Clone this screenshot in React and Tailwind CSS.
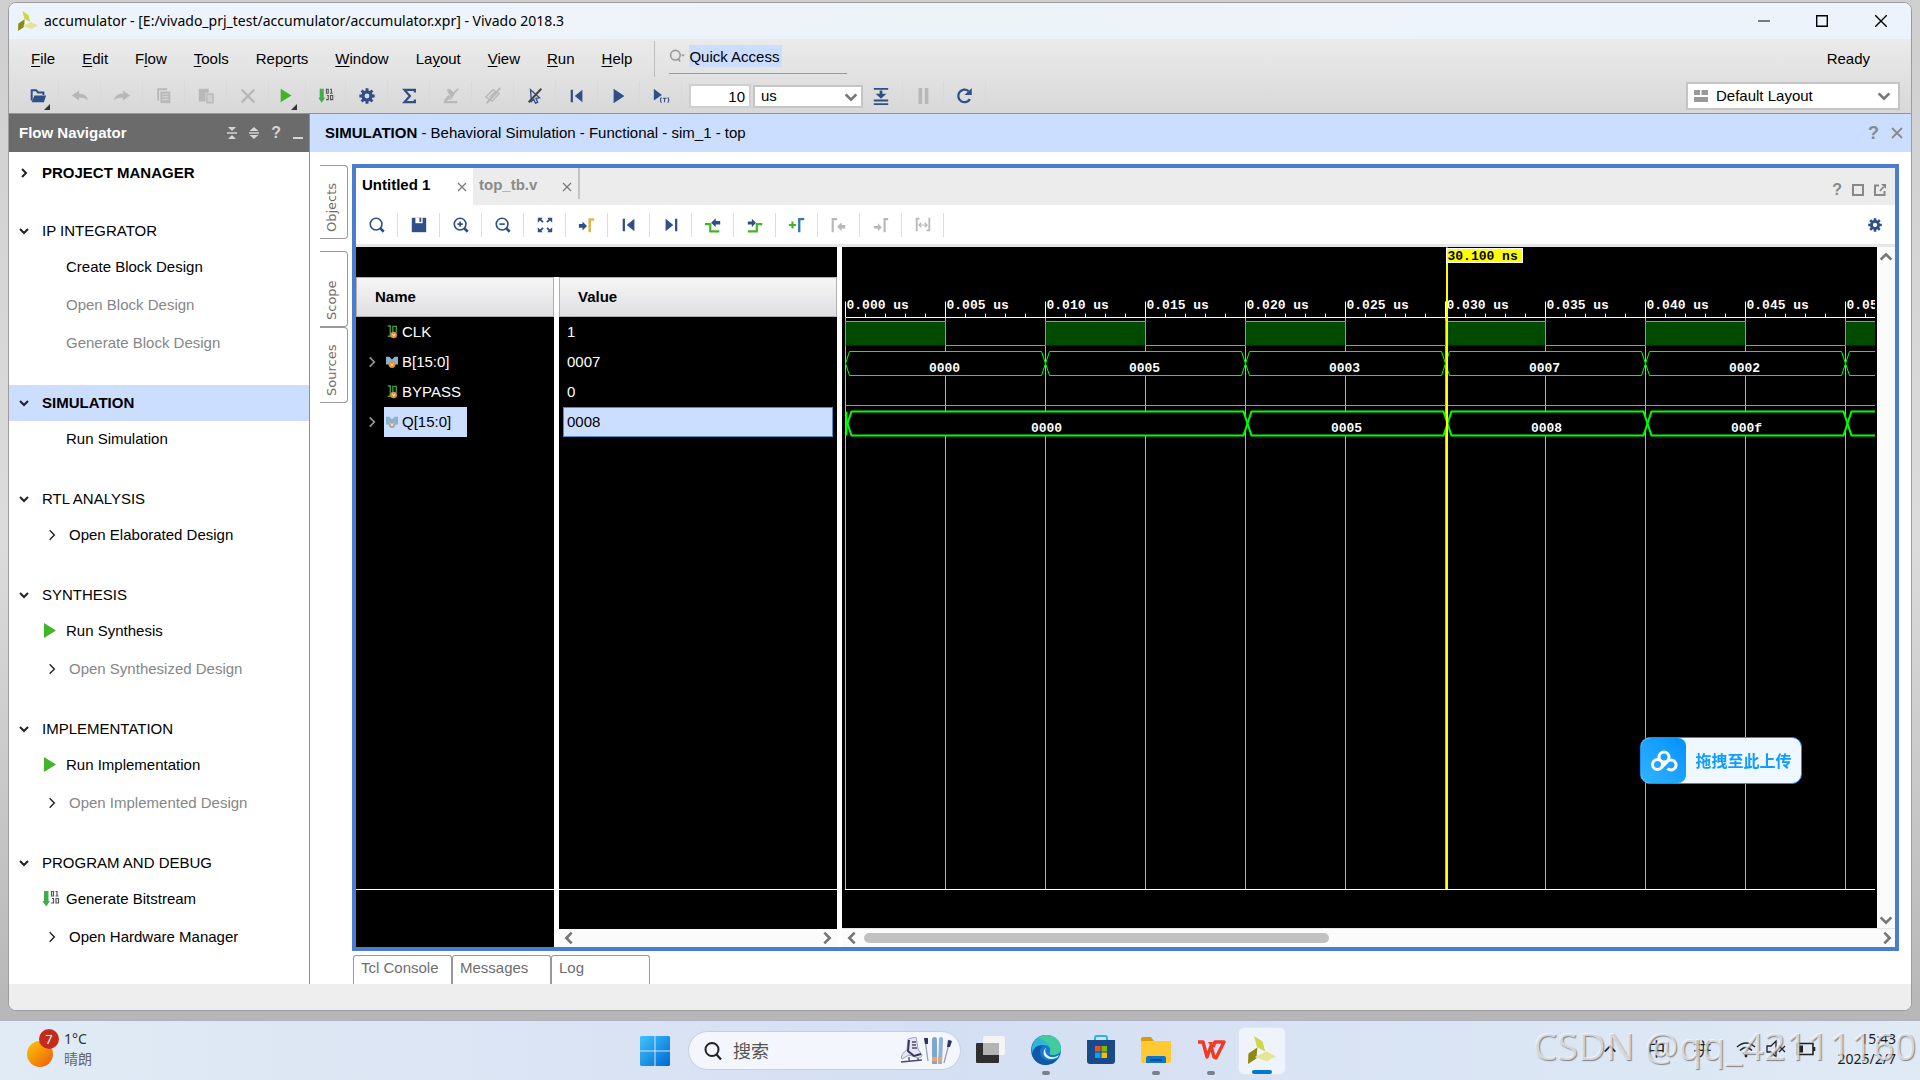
import React from "react";

const BLUE = "#2f4f87";
const GRAY = "#b8b8b8";
const GREEN = "#3fb527";

function Icon({ size = "w-5 h-5", box = "0 0 20 20", children, label }) {
  return (
    <svg className={`${size} shrink-0`} viewBox={box} fill="none" aria-hidden={label ? undefined : true} aria-label={label}>
      {children}
    </svg>
  );
}

const Logo = ({ size }) => (
  <Icon size={size}>
    <path d="M4.3 0 10.5 4 12.3 11 6.5 8Z" fill="#cfd64a" />
    <path d="M.3 12.5 6.7 8.3 6 16 0 20Z" fill="#8b8b12" />
    <path d="M13.3 11 20 14.6 13.3 18 4.7 15Z" fill="#e3e496" />
  </Icon>
);

const Chevron = ({ dir = "down", color = "#222", size = "w-3 h-3", w = 2 }) => {
  const d = { down: "M2 4 6 8 10 4", up: "M2 8 6 4 10 8", right: "M4 2 8 6 4 10", left: "M8 2 4 6 8 10" }[dir];
  return (
    <Icon size={size} box="0 0 12 12">
      <path d={d} stroke={color} strokeWidth={w} />
    </Icon>
  );
};

const Play = ({ color = GREEN }) => (
  <Icon>
    <path d="M3 2 15 9.500 3 17Z" fill={color} />
  </Icon>
);

const Bits = () => (
  <Icon>
    <path d="M3 2H7.500V12H9L5.200 17.500 1.500 12H3Z" fill="#3fae49" />
    <path d="M10.500 2.500h2v4.500h-2zM14.500 2.500h1.500v5M14.500 7h3M11 9.500h1.500v5M10 14h3M15 9.500h2.500v4.500h-2.500z" stroke="#555" strokeWidth="1.200" />
  </Icon>
);

const Gear = ({ color = BLUE }) => (
  <Icon>
    <circle cx="10" cy="10" r="4.500" stroke={color} strokeWidth="3.600" />
    <path d="M10 1.500V5M10 15v3.500M1.500 10H5M15 10h3.500M4 4l2.500 2.500M13.500 13.500 16 16M16 4l-2.500 2.500M6.500 13.500 4 16" stroke={color} strokeWidth="3.200" />
  </Icon>
);

const StepStart = () => (
  <Icon>
    <path d="M3 3h2.500v14H3zM16 3v14L7.500 10z" fill={BLUE} />
  </Icon>
);

const StepEnd = () => (
  <Icon>
    <path d="M14.500 3H17v14h-2.500zM4 3v14l8.500-7z" fill={BLUE} />
  </Icon>
);

const Magnifier = ({ sign }) => (
  <Icon>
    <circle cx="9" cy="9" r="6.500" stroke={BLUE} strokeWidth="1.800" />
    <path d="m13.500 13.500 4 4" stroke={BLUE} strokeWidth="3" />
    {sign && <path d={sign === "+" ? "M6 9h6M9 6v6" : "M6 9h6"} stroke={BLUE} strokeWidth="1.800" />}
  </Icon>
);

const mainTools = [
  { name: "Open", w: "w-[42px]", menu: true, icon: <Icon><path d="M3 15V3.500h5L10 6h6v3" stroke={BLUE} strokeWidth="2.200" /><path d="M6 9.500h13L16.500 17H3z" fill={BLUE} /></Icon> },
  { name: "Undo", w: "w-[42px]", off: true, icon: <Icon><path d="M1 9.500 9 4v3.500c5 0 9 2 10 7.500-3-2.500-5-3-10-3V15z" fill={GRAY} /></Icon> },
  { name: "Redo", w: "w-[42px]", off: true, icon: <Icon><path d="M19 9.500 11 4v3.500c-5 0-9 2-10 7.500 3-2.500 5-3 10-3V15z" fill={GRAY} /></Icon> },
  { name: "Copy", w: "w-[42px]", off: true, icon: <Icon><path d="M2.500 1.500h11v2h-9V15h-2z" fill={GRAY} /><path d="M6 5h11v13H6z" fill={GRAY} /><path d="M8 8h7M8 11h7M8 14h7" stroke="#dedede" /></Icon> },
  { name: "Paste", w: "w-[42px]", off: true, icon: <Icon><path d="M2 2h11v4.500H9.500V16H2z" fill={GRAY} /><path d="M11 7.800h6.800v9.700H11z" stroke={GRAY} strokeWidth="1.500" fill="#cfcfcf" /></Icon> },
  { name: "Delete", w: "w-[42px]", off: true, icon: <Icon><path d="M3 3 17 17M17 3 3 17" stroke={GRAY} strokeWidth="2.600" /></Icon> },
  { name: "Run", w: "w-[37px]", menu: true, icon: <Play /> },
  { name: "Generate Bitstream", w: "w-[40px]", icon: <Bits /> },
  { name: "Settings", w: "w-[42px]", icon: <Gear /> },
  { name: "Report", w: "w-[42px]", icon: <Icon><path d="M16.500 6V3.200H5L11 10 5 16.800h11.500V14" stroke={BLUE} strokeWidth="2.500" /></Icon> },
  { name: "Clear highlight", w: "w-[42px]", off: true, icon: <Icon><path d="M2 15.500h15v2.500H2z" fill={GRAY} /><path d="M5 3l4-1 5 6-3 5zM3 14l4-5 4 5z" fill={GRAY} /><path d="M18 2 3 16" stroke={GRAY} strokeWidth="2" /></Icon> },
  { name: "Unmark", w: "w-[42px]", off: true, icon: <Icon><path d="m2 11 8-8 7 4-8 9zM6 11l7-6M8 13l6-6" stroke={GRAY} strokeWidth="1.500" /><path d="M18 1 3 18" stroke={GRAY} strokeWidth="2.200" /></Icon> },
  { name: "Unselect", w: "w-[42px]", icon: <Icon><path d="m5 3 10 9-4 .5 2 4.500-2.500 1-2-4.500L6 16z" stroke={BLUE} strokeWidth="1.500" /><path d="M17 2 3 17" stroke="#444" strokeWidth="2.200" /></Icon> },
  { name: "Restart", w: "w-[42px]", icon: <StepStart /> },
  { name: "Run all", w: "w-[42px]", icon: <Icon><path d="M4 2 16 10 4 18Z" fill={BLUE} /></Icon> },
  { name: "Run for time", w: "w-[42px]", icon: <Icon><path d="M2 2 11 9 2 15Z" fill={BLUE} /><path d="M10.500 11.500c-1.500 2-1.500 4 0 6M17.500 11.500c1.500 2 1.500 4 0 6M12 12.500h4M14 12.500v4.500" stroke={BLUE} strokeWidth="1.200" /></Icon> },
];

const waveTools = [
  ["Search", <Magnifier />],
  ["Save", <Icon><path d="M2 2h16v16H2z" fill={BLUE} /><path d="M6 2h8v6H6z" fill="#fff" /><path d="M10.500 2h2v4.500h-2z" fill={BLUE} /></Icon>],
  ["Zoom in", <Magnifier sign="+" />],
  ["Zoom out", <Magnifier sign="-" />],
  ["Zoom fit", <Icon><path d="M2 2h5.500L6 3.500 8.500 6 7 7.500 4.500 5 2 7.500zM18 2h-5.500L14 3.500 11.500 6 13 7.500 15.500 5 18 7.500zM2 18h5.500L6 16.500 8.500 14 7 12.500 4.500 15 2 12.500zM18 18h-5.500l1.500-1.500-2.500-2.500 1.500-1.500 2.500 2.500 2.500-2.500z" fill={BLUE} /></Icon>],
  ["Go to cursor", <Icon><path d="M1 9h4V6l5 5-5 5v-3H1z" fill={BLUE} /><path d="M13 18V4h5" stroke="#dcb84c" strokeWidth="2.800" /></Icon>],
  ["Go to time 0", <StepStart />],
  ["Go to last time", <StepEnd />],
  ["Previous transition", <Icon><path d="M1 9h6v8h10" stroke={GREEN} strokeWidth="2.400" /><path d="M8 7.500l5-5v3h5v4h-5v3z" fill={BLUE} /></Icon>],
  ["Next transition", <Icon><path d="M2 17h10V9h6" stroke={GREEN} strokeWidth="2.400" /><path d="M11 7.500 6.500 3v3H2v3.500h4.500v3z" fill={BLUE} /></Icon>],
  ["Add marker", <Icon><path d="M1 10h8M5 6v8" stroke={GREEN} strokeWidth="2.400" /><path d="M12.500 18V3.500H18" stroke="#2f7aa8" strokeWidth="2.600" /></Icon>],
  ["Previous marker", <Icon><path d="M3 18V3.500h5" stroke={GRAY} strokeWidth="2.400" /><path d="M8 12l5-5v3h4v4h-4v3z" fill={GRAY} /></Icon>, true],
  ["Next marker", <Icon><path d="M14 18V3.500h4" stroke={GRAY} strokeWidth="2.400" /><path d="M11 12.500 6.500 8v3H2v3h4.500v3z" fill={GRAY} /></Icon>, true],
  ["Swap cursors", <Icon><path d="M3 2v15M17 2v15M3 3h3M14 16h3" stroke={GRAY} strokeWidth="2" /><path d="M6 10h8M8 7.500 5.500 10 8 12.500M12 7.500l2.500 2.500-2.500 2.500" stroke={GRAY} strokeWidth="1.300" /></Icon>, true],
];

const menus = [
  ["", "F", "ile"], ["", "E", "dit"], ["F", "l", "ow"], ["", "T", "ools"], ["Rep", "o", "rts"],
  ["", "W", "indow"], ["La", "y", "out"], ["", "V", "iew"], ["", "R", "un"], ["", "H", "elp"],
];

const flow = [
  { title: "IP INTEGRATOR", items: [["Create Block Design"], ["Open Block Design", "", true], ["Generate Block Design", "", true]] },
  { title: "SIMULATION", active: true, items: [["Run Simulation"]] },
  { title: "RTL ANALYSIS", items: [["Open Elaborated Design", "chev"]] },
  { title: "SYNTHESIS", items: [["Run Synthesis", "play"], ["Open Synthesized Design", "chev", true]] },
  { title: "IMPLEMENTATION", items: [["Run Implementation", "play"], ["Open Implemented Design", "chev", true]] },
  { title: "PROGRAM AND DEBUG", items: [["Generate Bitstream", "bits"], ["Open Hardware Manager", "chev"]] },
];

function FlowNavigator() {
  return (
    <aside className="w-[301px] shrink-0 bg-white border-r border-[#8f8f8f] flex flex-col">
      <header className="h-[38px] shrink-0 bg-[#6b6b6b] text-white flex items-center pl-2.5 pr-1.5 gap-3">
        <h2 className="font-bold flex-1">Flow Navigator</h2>
        <button aria-label="Collapse all"><Icon size="w-2.5 h-3.5" box="0 0 10 14"><path d="M1 1h8L5 5zM1 13h8L5 9z" fill="#d5d5d5" /><path d="M0 7h10" stroke="#d5d5d5" strokeWidth="1.500" /></Icon></button>
        <button aria-label="Expand all"><Icon size="w-2.5 h-3.5" box="0 0 10 14"><path d="M5 1l4.500 4h-9zM5 13l4.500-4h-9z" fill="#d5d5d5" /><path d="M0 7h10" stroke="#d5d5d5" strokeWidth="1.500" /></Icon></button>
        <button aria-label="Help" className="font-bold text-[#d5d5d5] text-base">?</button>
        <button aria-label="Minimize"><Icon size="w-2.5 h-3.5" box="0 0 10 14"><path d="M0 12h10" stroke="#d5d5d5" strokeWidth="2" /></Icon></button>
      </header>
      <nav className="pt-[3px]">
        <button className="h-9 w-full flex items-center pl-[7px] gap-2.5 font-bold text-left mb-[22px]">
          <span className="w-4 pl-0.5"><Chevron dir="right" /></span>
          PROJECT MANAGER
        </button>
        <div className="flex flex-col gap-6">
          {flow.map((s) => (
            <section key={s.title}>
              <button className={`h-9 w-full flex items-center pl-[7px] gap-2.5 text-left ${s.active ? "bg-[#ccdeff] font-bold" : ""}`}>
                <span className="w-4 pl-0.5"><Chevron /></span>
                {s.title}
              </button>
              <ul className="flex flex-col gap-0.5">
                {s.items.map(([t, kind, off]) => (
                  <li key={t} className="h-9">
                    <button disabled={off} className={`h-full w-full flex items-center pl-8 text-left ${off ? "text-[#868686]" : "text-black"}`}>
                      <span className={kind === "chev" ? "w-7 pl-1" : "w-[25px]"}>
                        {kind === "chev" && <Chevron dir="right" size="w-3.5 h-3.5" w={1.2} />}
                        {kind === "play" && <Play />}
                        {kind === "bits" && <Bits />}
                      </span>
                      {t}
                    </button>
                  </li>
                ))}
              </ul>
            </section>
          ))}
        </div>
      </nav>
    </aside>
  );
}

function SignalIcon({ bus, muted }) {
  return bus ? (
    <Icon size="w-3 h-4" box="0 0 14 16">
      <path d="M0 2h4l3 3 3-3h4v9h-4L7 9l-3 2H0z" fill="#86b4cf" />
      <circle cx="7" cy="11" r="4" fill={muted ? "#a9a9a9" : "#ec8c23"} />
      <path d="M5.500 9.500 7 12.500l1.500-3" stroke="#fff" />
    </Icon>
  ) : (
    <Icon size="w-3 h-4" box="0 0 14 16">
      <path d="M2 1h3v12M2 13h4M8 9V1.500h4V9" stroke="#3f9a4a" strokeWidth="1.600" />
      <circle cx="9" cy="11.500" r="3.800" fill="#ec8c23" />
      <path d="M7.500 10l1.500 3 1.500-3" stroke="#fff" />
    </Icon>
  );
}

const signals = [
  { name: "CLK", value: "1" },
  { name: "B[15:0]", value: "0007", bus: true },
  { name: "BYPASS", value: "0" },
  { name: "Q[15:0]", value: "0008", bus: true, selected: true },
];

const clockHigh = [0, 200, 400, 600, 800, 1000];
const bBus = [[0, 200, "0000"], [200, 400, "0005"], [400, 600, "0003"], [600, 800, "0007"], [800, 1000, "0002"], [1000, 1200, ""]];
const qBus = [[2, 402, "0000"], [402, 602, "0005"], [602, 802, "0008"], [802, 1002, "000f"], [1002, 1202, ""]];

function Bus({ spans, top, width }) {
  const mid = top + 12;
  const bottom = top + 24;
  return spans.map(([a, b, v]) => (
    <g key={a}>
      <path d={`M${a} ${mid}L${a + 4} ${top}H${b - 4}L${b} ${mid}L${b - 4} ${bottom}H${a + 4}Z`} fill="#000" stroke="#00ff00" strokeWidth={width} />
      <text x={(a + b) / 2 - 1} y={mid + 8} textAnchor="middle" fill="#fff">{v}</text>
    </g>
  ));
}

function Waveform() {
  const majors = Array.from({ length: 11 }, (_, i) => i);
  return (
    <div className="flex-1 min-w-0 bg-black flex flex-col pl-[3px]">
      <div className="flex-1 min-h-0 mr-0.5 border-b border-white relative">
        <svg className="absolute inset-0 w-full h-full overflow-hidden font-['Liberation_Mono',monospace] text-[13px] font-bold" role="img" aria-label="Waveform">
          <g transform="translate(.5 .5)">
            {majors.map((i) => (
              <line key={i} x1={i * 100} x2={i * 100} y1="70" y2="100%" stroke="#b4b4b4" />
            ))}
            {majors.map((i) => (
              <g key={i}>
                <path d={`M${i * 100} 54V70M${i * 100 + 20} 66v4M${i * 100 + 40} 66v4M${i * 100 + 60} 66v4M${i * 100 + 80} 66v4`} stroke="#fff" />
                <text x={i * 100 + 1} y="61" fill="#fff">{`0.${String(i * 5).padStart(3, "0")} us`}</text>
              </g>
            ))}
            <path d="M0 70H2000" stroke="#fff" />
            <rect x="0" y="74" width="1100" height="24" fill="#000" />
            {clockHigh.map((x) => (
              <g key={x}>
                <rect x={x} y="74" width="100" height="24" fill="#004b00" />
                <path d={`M${x} 98V74H${x + 100}V98H${x + 200}`} stroke="#00ff00" fill="none" />
              </g>
            ))}
            <Bus spans={bBus} top={104} width={1} />
            <path d="M0 158H2000" stroke="#00ff00" />
            <path d="M1 164V188" stroke="#00ff00" strokeWidth="2" />
            <Bus spans={qBus} top={164} width={2} />
            <path d="M601.500 0V2000" stroke="#ffff00" strokeWidth="2" />
            <rect x="601" y="1" width="76" height="14" fill="#ffff00" stroke="#fff" />
            <text x="602" y="12" fill="#000">30.100 ns</text>
          </g>
        </svg>
      </div>
      <div className="h-[38px] shrink-0" />
    </div>
  );
}

function SignalTable() {
  return (
    <div className="w-[481px] shrink-0 bg-black flex flex-col">
      <div className="h-[30px] shrink-0" />
      <table className="w-full table-fixed border-collapse text-white">
        <colgroup>
          <col className="w-[203px]" />
          <col />
        </colgroup>
        <thead>
          <tr className="h-10 text-black text-left">
            <th className="p-0 bg-white"><div className="h-10 mr-[5px] flex items-center pl-[18px] border border-[#b0b0b0] bg-linear-to-b from-[#f6f6f6] to-[#dfdfe2]">Name</div></th>
            <th className="p-0"><div className="h-10 flex items-center pl-[18px] border border-[#b0b0b0] bg-linear-to-b from-[#f6f6f6] to-[#dfdfe2]">Value</div></th>
          </tr>
        </thead>
        <tbody>
          {signals.map((s) => (
            <tr key={s.name} className="h-[30px]">
              <td className="p-0 bg-white">
                <div className="h-[30px] mr-[5px] bg-black flex items-center">
                  <span className="w-7 flex justify-center pl-1">{s.bus && <Chevron dir="right" color="#999" size="w-3.5 h-3.5" w={1.4} />}</span>
                  <span className={`h-full flex items-center gap-1 pl-0.5 ${s.selected ? "bg-[#ccdeff] text-black pr-4" : ""}`}>
                    <SignalIcon bus={s.bus} muted={s.selected} />
                    {s.name}
                  </span>
                </div>
              </td>
              <td className="p-0">
                {s.selected ? (
                  <div className="h-[30px] mx-1 pl-[3px] flex items-center bg-[#ccdeff] text-black border border-[#4a90d0]">{s.value}</div>
                ) : (
                  <div className="h-[30px] pl-2 flex items-center">{s.value}</div>
                )}
              </td>
            </tr>
          ))}
        </tbody>
      </table>
      <div className="flex-1 flex">
        <div className="w-[198px] flex flex-col">
          <div className="flex-1 border-b border-white" />
          <div className="h-[57px]" />
        </div>
        <div className="w-[5px] bg-white" />
        <div className="flex-1 flex flex-col">
          <div className="flex-1 border-b border-white" />
          <div className="h-[39px]" />
          <div className="h-[18px] bg-[#fbfbfb] flex items-center justify-between px-0.5">
            <Chevron dir="left" color="#777" size="w-4 h-4" />
            <Chevron dir="right" color="#777" size="w-4 h-4" />
          </div>
        </div>
      </div>
    </div>
  );
}

function SideTab({ children, h }) {
  return (
    <button className={`${h} w-[28px] border border-r-0 border-[#999] rounded-l text-[#6e6e6e] flex items-center justify-start pt-1.5 pl-1 font-['DejaVu_Sans',sans-serif] text-[13px] [writing-mode:vertical-rl] rotate-180`}>
      {children}
    </button>
  );
}

function WavePanel() {
  return (
    <section className="flex-1 min-h-0 border-4 border-[#4a7dd0] flex flex-col bg-white">
      <div className="h-[37px] shrink-0 bg-[#ececec] flex items-stretch">
        <div role="tablist" className="flex">
          <div className="w-[117px] bg-white flex items-center pl-1.5 pr-1.5 pb-1 font-bold">
            <button role="tab" aria-selected="true" className="flex-1 text-left">Untitled 1</button>
            <button aria-label="Close Untitled 1" className="pt-1"><Icon size="w-2.5 h-2.5" box="0 0 10 10"><path d="M1 1 9 9M9 1 1 9" stroke="#777" strokeWidth="1.200" /></Icon></button>
          </div>
          <div className="w-[107px] mb-1.5 border-r-2 border-[#c4c4c4] flex items-center px-1.5 pt-0.5 font-bold text-[#8a8a8a]">
            <button role="tab" aria-selected="false" className="flex-1 text-left">top_tb.v</button>
            <button aria-label="Close top_tb.v" className="pt-1"><Icon size="w-2.5 h-2.5" box="0 0 10 10"><path d="M1 1 9 9M9 1 1 9" stroke="#777" strokeWidth="1.200" /></Icon></button>
          </div>
        </div>
        <div className="ml-auto flex items-center gap-2.5 pr-[9px] pt-1.5 text-[#8a8a8a]">
          <button aria-label="Help" className="font-bold text-base">?</button>
          <button aria-label="Maximize"><Icon size="w-3 h-3" box="0 0 12 12"><path d="M1 1h10v10H1z" stroke="#888" strokeWidth="2" /></Icon></button>
          <button aria-label="Float"><Icon size="w-3 h-3" box="0 0 12 12"><path d="M5 1.500H1v9.500h9.500V7" stroke="#888" strokeWidth="2" /><path d="M6 7 9.500 3" stroke="#888" strokeWidth="1.800" /><path d="M7 0h5v5z" fill="#888" /></Icon></button>
        </div>
      </div>
      <div className="h-[42px] shrink-0 border-b-[3px] border-[#e6e6e6] flex items-center pr-2">
        {waveTools.map(([n, ic, off]) => (
          <button key={n} aria-label={n} disabled={off} className="w-[42px] h-6 border-r border-[#dcdcdc] flex items-center justify-center"><span className="scale-90">{ic}</span></button>
        ))}
        <button aria-label="Waveform options" className="ml-auto w-6 flex justify-center"><span className="scale-80"><Gear /></span></button>
      </div>
      <div className="flex-1 min-h-0 flex">
        <SignalTable />
        <div className="w-[5px] shrink-0 bg-white" />
        <div className="flex-1 min-w-0 flex flex-col">
          <div className="flex-1 min-h-0 flex">
            <Waveform />
            <div className="w-[18px] shrink-0 bg-[#fbfbfb] flex flex-col items-center justify-between pt-0.5">
              <Chevron dir="up" color="#777" size="w-4 h-4" />
              <Chevron dir="down" color="#777" size="w-4 h-4" />
            </div>
          </div>
          <div className="h-[19px] shrink-0 bg-[#fbfbfb] border-t border-[#e6e6e6] flex items-center pl-0.5">
            <Chevron dir="left" color="#777" size="w-4 h-4" />
            <div className="flex-1 px-1"><div className="w-[46%] h-2.5 rounded-full bg-[#c1c1c1]" /></div>
            <Chevron dir="right" color="#777" size="w-4 h-4" />
          </div>
        </div>
      </div>
    </section>
  );
}

function Taskbar() {
  return (
    <footer className="h-[60px] shrink-0 border-t border-[#a9b4c2] bg-linear-to-r from-[#e1ebf5] via-[#d5dff3] to-[#dfeaf5] flex items-center px-6 font-['Noto_Sans','Noto_Sans_CJK_SC',sans-serif]">
      <button className="flex-1 flex items-center gap-2 text-left text-sm leading-5 text-[#333]">
        <span className="relative w-8 h-10">
          <span className="absolute left-[3px] top-2.5 w-[26px] h-[26px] rounded-full bg-linear-to-br from-[#ffc400] to-[#e8590c]" />
          <span className="absolute left-[15px] -top-0.5 w-5 h-5 rounded-full bg-[#c42b1c] text-white text-[13px] leading-5 text-center">7</span>
        </span>
        <span className="pb-1"><span className="block">1°C</span><span className="block text-[#666]">晴朗</span></span>
      </button>
      <div className="flex items-center pl-1.5">
        <button aria-label="Start" className="mr-[18px]">
          <Icon size="w-[30px] h-[30px]" box="0 0 30 30">
            <defs><linearGradient id="win" x1="0" y1="0" x2="1" y2="1"><stop stopColor="#3fc3ff" /><stop offset="1" stopColor="#0069cf" /></linearGradient></defs>
            <path d="M1 0h13.500v14.500H0V1zM15.500 0H29l1 1v13.500H15.500zM0 15.500h14.500V30H1l-1-1zM15.500 15.500H30V29l-1 1H15.500z" fill="url(#win)" />
          </Icon>
        </button>
        <label className="w-[273px] h-[39px] rounded-full bg-[#f3f7fd] border border-[#c6cfe0] flex items-center pl-3.5 pr-2 gap-2.5">
          <Icon><circle cx="9" cy="8.500" r="6.500" stroke="#222" strokeWidth="2" /><path d="m13.500 13.500 4.500 5" stroke="#222" strokeWidth="2.200" /></Icon>
          <input aria-label="搜索" placeholder="搜索" className="flex-1 min-w-0 bg-transparent text-lg outline-none placeholder:text-[#555]" />
          <Icon size="w-[52px] h-7" box="0 0 52 28">
            <path d="M8 2 16 0 18 12 22 18C22 21 18 21 15 20L9 18 2 22C0 20 3 15 7 13Z" fill="#e4e6f2" stroke="#9a9fc0" />
            <path d="M9 3 8 14 14 19 21 17" stroke="#3a375f" strokeWidth="2" />
            <path d="M1 25 22 23M9 20v4M18 21v3M12 5h4M12 8h4M12 11h5" stroke="#4a4870" strokeWidth="1.300" />
            <path d="m25 2 3 22M50 3l-6 23" stroke="#9aa0b4" strokeWidth="1.300" />
            <path d="M24 1h4v6h-3zM48 3l4 1-2 6h-3z" fill="#2c3558" />
            <path d="M32 3q0-3 2.500-3T37 3v24h-5z" fill="#7fa6d0" /><path d="M39 3q0-3 2-3t2 3l-1 24h-4z" fill="#8fb2d8" />
            <path d="M32 20h5v4h-5zM38 20h4v4h-4z" fill="#f0a36a" />
          </Icon>
        </label>
        <div className="flex items-center pl-0.5">
          <TaskItem label="Task view"><rect x="0" y="8" width="23" height="20" rx="1" fill="#2f2f2f" /><rect x="7" y="1" width="22" height="19" rx="1.500" fill="#f4f4f4" /><path d="M7 8h16v12H7z" fill="#b4b4b4" /></TaskItem>
          <TaskItem label="Edge" dot>
            <circle cx="15" cy="15" r="15" fill="#1478cf" />
            <path d="M1 12C3 4 9 0 15 0c9 0 15 6 15 13 0 5-4 7-8 7-3 0-4-1.500-3-3 1-4-2-7-6-7C7 10 3 14 1 19z" fill="#31b4d8" />
            <path d="M15 0c9 0 15 6 15 13 0 5-4 7-8 7-3 0-4-1.500-3-3 1-2 1-5-2-8-2-3-6-5-10-6 2-2 5-3 8-3z" fill="#4bd483" fillOpacity=".7" />
            <path d="M1 19C2 13 7 9.500 12 10.500c-4 3-4 9 0 13 4 3 10 3 15-.5-3 5-8 7-13 7C7 29.500 2 25 1 19z" fill="#0f58a8" />
            <path d="M15 13c-2 3 0 8 5 9 3 .6 6-.5 8-2-1 2-2 3-3 3-5 2-10 1-12-3-1-3 0-6 2-7z" fill="#eaf4fb" />
          </TaskItem>
          <TaskItem label="Store">
            <path d="M9 6V3q0-2 2-2h8q2 0 2 2v3" stroke="#22b4f0" strokeWidth="2" />
            <path d="M1 5h28v21q0 3-3 3H4q-3 0-3-3z" fill="#174a86" />
            <path d="M9 11h5.500v5.500H9z" fill="#f25022" /><path d="M15.500 11H21v5.500h-5.500z" fill="#7fba00" /><path d="M9 17.500h5.500V23H9z" fill="#00a4ef" /><path d="M15.500 17.500H21V23h-5.500z" fill="#ffb900" />
          </TaskItem>
          <TaskItem label="Explorer" dot>
            <path d="M0 4q0-2 2-2h8l3 4H0z" fill="#d99a06" />
            <path d="M0 6h30v20q0 2-2 2H2q-2 0-2-2z" fill="#ffc933" />
            <path d="M5 28v-5q0-2 2-2h16q2 0 2 2v5z" fill="#0f74cc" /><path d="M9 25h12" stroke="#083f7d" strokeWidth="1.500" />
          </TaskItem>
          <TaskItem label="WPS" dot>
            <path d="M2 7h5l4 15 4-11 3 11 2 1 8-16h-9l-2 5" stroke="#f03a26" strokeWidth="3.400" strokeLinejoin="round" />
            <path d="M12 7h5l-2 5z" fill="#f03a26" />
          </TaskItem>
          <button aria-label="Vivado" className="w-12 h-12 rounded-md bg-[#eff3fb] border border-[#dfe5f2] flex flex-col items-center pt-2">
            <Logo size="w-7 h-7" />
            <span className="mt-1.5 w-5 h-1 rounded-full bg-[#0078d4]" />
          </button>
        </div>
      </div>
      <div className="flex-1 flex items-center justify-end text-sm text-[#1c1c1c]">
        <div className="relative flex items-center justify-end pb-1">
          <button aria-label="Hidden icons" className="mr-[30px]"><Chevron dir="up" w={1.3} size="w-4 h-4" /></button>
          <span className="text-lg mr-7">中</span>
          <span className="text-lg mr-6">拼</span>
          <button aria-label="Network, sound and battery" className="flex items-center gap-2.5 mr-[22px]">
            <Icon><path d="M1 8q9-8 18 0M4 11.500q6-6 12 0M7 14.500q3-3 6 0" stroke="#222" strokeWidth="1.600" /><circle cx="10" cy="17" r="1.400" fill="#222" /></Icon>
            <Icon><path d="M1 7h4l5-5v16l-5-5H1zM13 7l6 6M19 7l-6 6" stroke="#222" strokeWidth="1.300" /></Icon>
            <Icon><path d="M1 4.500h16v11H1zM18.500 8v4" stroke="#222" strokeWidth="1.600" /><path d="M3 6.500h4v7H3z" fill="#222" /></Icon>
          </button>
          <button className="text-right leading-5"><span className="block">15:43</span><span className="block">2025/2/7</span></button>
          <span className="absolute -right-5 -top-1 whitespace-nowrap pointer-events-none font-['Noto_Sans',sans-serif] text-[38px] leading-10 text-white/65 [text-shadow:1px_1px_1px_rgba(90,90,90,.7)]">CSDN @qq_42111160</span>
        </div>
      </div>
    </footer>
  );
}

function TaskItem({ label, dot, children }) {
  return (
    <button aria-label={label} className="w-[55px] h-12 flex flex-col items-center pt-2">
      <Icon size="w-[30px] h-[30px]" box="0 0 30 30">{children}</Icon>
      {dot && <span className="mt-1.5 w-2 h-1 rounded-full bg-[#7b7f88]" />}
    </button>
  );
}

export default function App() {
  return (
    <div className="h-screen min-h-[800px] flex flex-col bg-linear-to-b from-[#cfcfcf] via-[#dcdcdc] to-[#b2b2b2] overflow-hidden font-['Liberation_Sans',Arial,sans-serif] text-[15px] leading-5 text-black">
      <div className="flex-1 min-h-0 mx-2 mt-0.5 mb-[9px] rounded-lg overflow-hidden border border-[#9c9c9c] bg-white flex flex-col">
        <header className="h-9 shrink-0 bg-linear-to-r from-[#edf3fc] via-[#edf4f8] to-[#edf3fc] flex items-center pl-[9px] font-['Noto_Sans',sans-serif]">
          <Logo size="w-5 h-5" />
          <h1 className="pl-1.5 text-sm flex-1">accumulator - [E:/vivado_prj_test/accumulator/accumulator.xpr] - Vivado 2018.3</h1>
          <button aria-label="Minimize window" className="w-[58px] flex justify-center"><Icon size="w-3 h-3" box="0 0 12 12"><path d="M0 6h12" stroke="#000" strokeWidth="1.200" /></Icon></button>
          <button aria-label="Maximize window" className="w-[58px] flex justify-center"><Icon size="w-3 h-3" box="0 0 12 12"><path d="M.7.7h10.600v10.600H.7z" stroke="#000" strokeWidth="1.400" /></Icon></button>
          <button aria-label="Close window" className="w-[60px] flex justify-center"><Icon size="w-3 h-3" box="0 0 12 12"><path d="M0 0 12 12M12 0 0 12" stroke="#000" strokeWidth="1.400" /></Icon></button>
        </header>

        <div className="h-[75px] shrink-0 bg-linear-to-b from-[#ebebeb] to-[#d8d8d8] border-b border-[#8f9499] flex flex-col">
          <div className="h-10 flex items-center">
            <nav className="flex gap-[27px] pl-[22px] pr-[22px]">
              {menus.map(([a, b, c]) => (
                <button key={a + b + c}>{a}<u className="underline-offset-2">{b}</u>{c}</button>
              ))}
            </nav>
            <div className="h-9 border-l border-[#bdbdbd] pl-3.5 flex items-start pt-1">
              <label className="flex items-center gap-1 border-b border-[#999] w-[178px] h-[29px] pb-1.5">
                <Icon size="w-4 h-4"><circle cx="8" cy="9" r="6" stroke="#999" strokeWidth="2" /><path d="m11 13 3 4" stroke="#999" strokeWidth="2" /><path d="M15 8h5l-2.500 3z" fill="#999" /></Icon>
                <input aria-label="Quick Access" defaultValue="Quick Access" className="w-[93px] h-[22px] bg-[#ccdeff] outline-none" />
              </label>
            </div>
            <span className="ml-auto pr-[41px]">Ready</span>
          </div>
          <div className="flex-1 flex items-center pl-2">
            {mainTools.map((t) => (
              <button key={t.name} aria-label={t.name} disabled={t.off} className={`${t.w} h-7 shrink-0 border-r border-[#d9d9d9] relative flex items-center justify-center`}>
                <span className="scale-90">{t.icon}</span>
                {t.menu && <span className="absolute right-2 bottom-0"><Icon size="w-1.5 h-1.5" box="0 0 6 6"><path d="M6 0v6H0z" fill="#333" /></Icon></span>}
              </button>
            ))}
            <input aria-label="Run time" defaultValue="10" className="ml-[7px] w-[62px] h-6 bg-white border-2 border-[#cfcfcf] text-right px-1 outline-none" />
            <span className="relative ml-0.5">
              <select aria-label="Time unit" className="appearance-none block w-[110px] h-[23px] leading-[18px] bg-white border-2 border-[#c4c4c4] px-1.5 outline-none"><option>us</option></select>
              <span className="absolute right-1 top-1 pointer-events-none"><Chevron color="#777" size="w-4 h-4" /></span>
            </span>
            <button aria-label="Run step" className="w-9 h-7 flex items-center justify-center"><Icon size="w-[18px] h-[18px]"><path d="M2 2h16M2 15h16M2 19h16" stroke={BLUE} strokeWidth="2" /><path d="M8.500 4h3v3.500H16L10 13 4 7.500h4.500z" fill={BLUE} /></Icon></button>
            <span className="w-[3px]" />
            <button aria-label="Pause" disabled className="w-[42px] h-7 flex items-center justify-center border-x border-[#d9d9d9]"><Icon size="w-[18px] h-[18px]"><path d="M5 1h4v18H5zM12 1h4v18h-4z" fill={GRAY} /></Icon></button>
            <button aria-label="Relaunch" className="w-[42px] h-7 flex items-center justify-center border-r border-[#d9d9d9]"><Icon size="w-[18px] h-[18px]"><path d="M15.500 13.500A7 7 0 1 1 14 4.500" stroke={BLUE} strokeWidth="2.600" /><path d="M17.500 1v8h-8z" fill={BLUE} /></Icon></button>
            <span className="relative ml-auto mr-[11px]">
              <span className="absolute left-2 top-2 pointer-events-none"><Icon size="w-3.5 h-3" box="0 0 14 12"><path d="M0 0h6v5H0zM7.500 0H14v5H7.500zM0 7h14v5H0z" fill="#999" /></Icon></span>
              <select aria-label="Layout" className="appearance-none block w-[214px] h-7 bg-white border-2 border-[#c4c4c4] pl-7 outline-none"><option>Default Layout</option></select>
              <span className="absolute right-2 top-1.5 pointer-events-none"><Chevron color="#777" size="w-4 h-4" /></span>
            </span>
          </div>
        </div>

        <div className="flex-1 min-h-0 flex">
          <FlowNavigator />
          <main className="flex-1 min-w-0 flex flex-col">
            <header className="h-[38px] shrink-0 bg-[#ccdeff] flex items-center pl-[15px] pr-2 gap-3">
              <h2 className="flex-1"><b>SIMULATION</b> - Behavioral Simulation - Functional - sim_1 - top</h2>
              <button aria-label="Help" className="font-bold text-lg text-[#8a8a8a]">?</button>
              <button aria-label="Close"><Icon size="w-3 h-3" box="0 0 12 12"><path d="M1 1 11 11M11 1 1 11" stroke="#8a8a8a" strokeWidth="1.800" /></Icon></button>
            </header>
            <div className="flex-1 min-h-0 flex pt-3 pr-3">
              <div className="w-[42px] shrink-0 flex flex-col pl-2.5 pt-px">
                <SideTab h="h-[74px]">Objects</SideTab>
                <span className="h-3" />
                <SideTab h="h-[76px]">Scope</SideTab>
                <SideTab h="h-[76px]">Sources</SideTab>
              </div>
              <div className="flex-1 min-w-0 flex flex-col">
                <WavePanel />
                <div className="flex pt-1 pl-px h-[33px] shrink-0 text-[#6e6e6e]">
                  {["Tcl Console", "Messages", "Log"].map((t) => (
                    <button key={t} className="w-[99px] border border-b-0 border-[#999] rounded-t-[3px] text-left pl-[7px] pb-1">{t}</button>
                  ))}
                </div>
              </div>
            </div>
          </main>
        </div>
        <div className="h-[26px] shrink-0 bg-[#eeeeee]" />
      </div>
      <Taskbar />
      <button className="fixed right-[118px] bottom-[296px] w-[162px] h-[47px] rounded-[10px] bg-[#f0f8ff] border border-[#1a8cff] overflow-hidden flex items-center font-bold text-base text-[#109dff] font-['Noto_Sans_CJK_SC',sans-serif]">
        <span className="w-[45px] h-full rounded-[8px] bg-linear-to-tr from-[#30b4ff] to-[#0090ff] flex items-center justify-center">
          <Icon size="w-7 h-6" box="0 0 28 24">
            <circle cx="14" cy="8" r="5" stroke="#fff" strokeWidth="3" /><circle cx="7.500" cy="15.500" r="5" stroke="#fff" strokeWidth="3" /><path d="m11 19 6.500-6.500a5 5 0 1 1 0 7" stroke="#fff" strokeWidth="3" />
          </Icon>
        </span>
        <span className="flex-1 text-center pb-0.5">拖拽至此上传</span>
      </button>
    </div>
  );
}
